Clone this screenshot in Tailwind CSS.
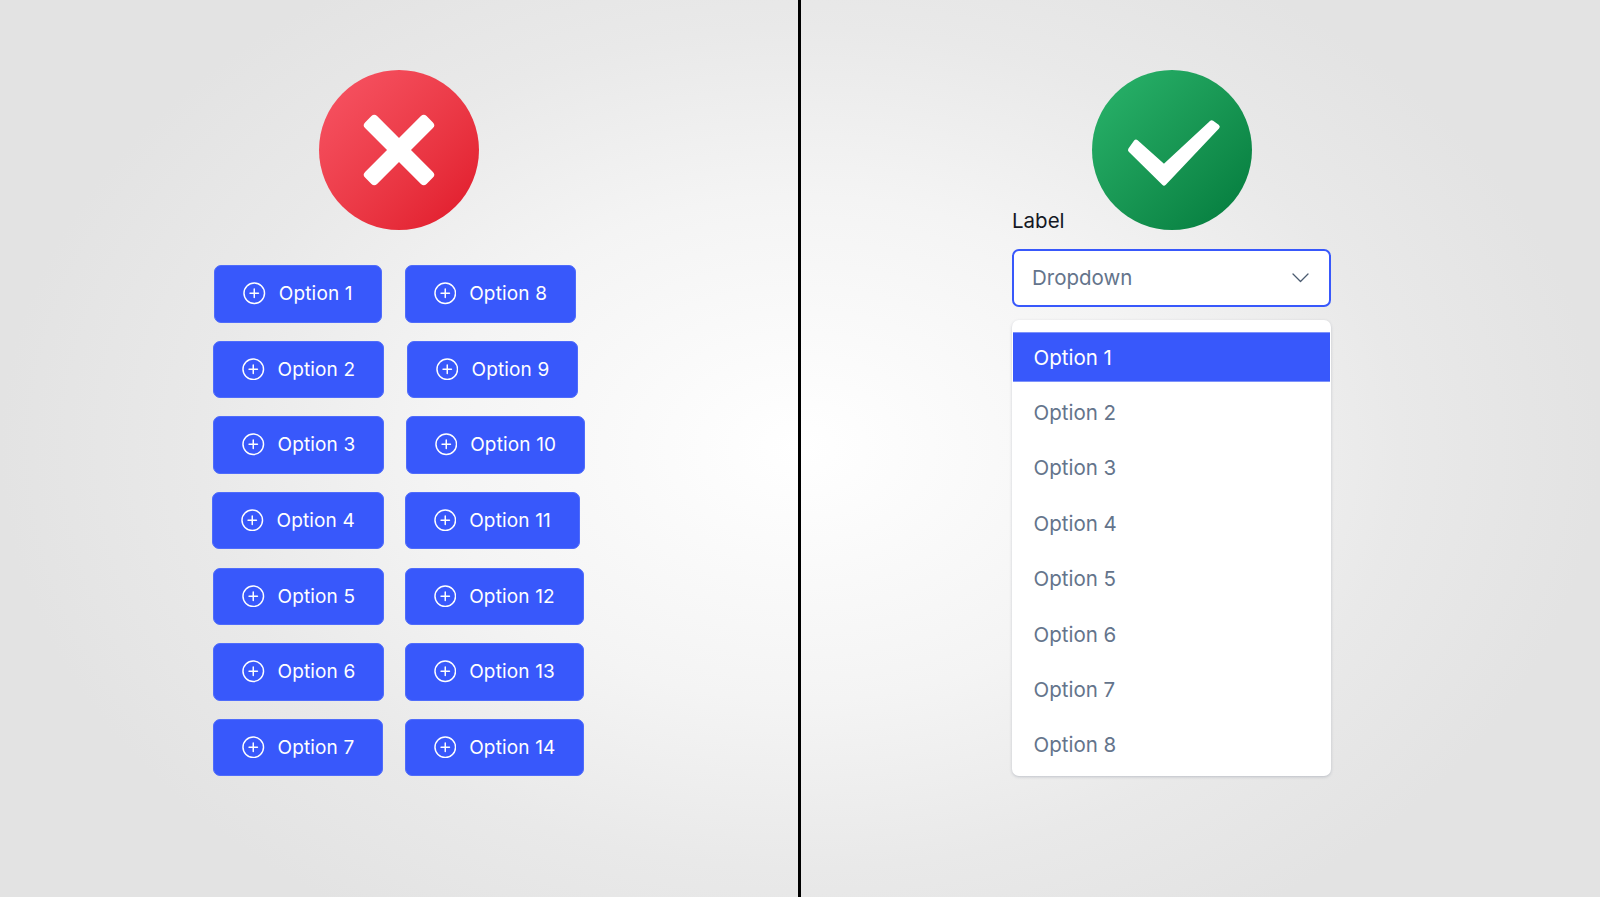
<!DOCTYPE html>
<html lang="en">
<head>
  <meta charset="UTF-8">
  <meta name="viewport" content="width=device-width, initial-scale=1.0">
  <title>Dropdown do and don't</title>
  <script src="https://cdn.jsdelivr.net/npm/@tailwindcss/browser@4"></script>
</head>
<body class="h-[897px] overflow-hidden font-['Inter',sans-serif] bg-[radial-gradient(ellipse_800px_560px_at_800px_448px,#ffffff_0%,#f4f4f4_45%,#e9e9e9_75%,#e3e3e3_100%)]">
  <div class="flex h-[897px]">

    <!-- left panel -->
    <div class="w-[798px] pt-[70px]">
      <div class="ml-[319px] size-[160px] rounded-full bg-linear-to-br from-[#f85565] to-[#e01428]">
        <svg class="size-[160px]" viewBox="0 0 160 160">
          <g fill="#fff" transform="rotate(45 80 80)">
            <rect x="36.5" y="71.5" width="87" height="17" rx="4"/>
            <rect x="71.5" y="36.5" width="17" height="87" rx="4"/>
          </g>
        </svg>
      </div>

      <div class="mt-[35px] flex">
        <div class="flex w-[404.7px] flex-col items-start gap-[18.17px] text-[19px] tracking-[0.15px] text-white">
          <button class="ml-[214.3px] flex h-[57.5px] items-center gap-[13px] rounded-[7px] border border-[#4f6cfb] bg-[#3858fb] px-[28px] pt-px">
            <svg class="-mt-[2px] size-[22.5px]" viewBox="0 0 23 23" fill="none" stroke="#fff" stroke-width="1.5" stroke-linecap="round"><circle cx="11.5" cy="11.5" r="10.5"/><path d="M11.5 7.2v8.6M7.2 11.5h8.6"/></svg>
            Option 1
          </button>
          <button class="ml-[213px] flex h-[57.5px] items-center gap-[13px] rounded-[7px] border border-[#4f6cfb] bg-[#3858fb] px-[28px] pt-px">
            <svg class="-mt-[2px] size-[22.5px]" viewBox="0 0 23 23" fill="none" stroke="#fff" stroke-width="1.5" stroke-linecap="round"><circle cx="11.5" cy="11.5" r="10.5"/><path d="M11.5 7.2v8.6M7.2 11.5h8.6"/></svg>
            Option 2
          </button>
          <button class="ml-[213px] flex h-[57.5px] items-center gap-[13px] rounded-[7px] border border-[#4f6cfb] bg-[#3858fb] px-[28px] pt-px">
            <svg class="-mt-[2px] size-[22.5px]" viewBox="0 0 23 23" fill="none" stroke="#fff" stroke-width="1.5" stroke-linecap="round"><circle cx="11.5" cy="11.5" r="10.5"/><path d="M11.5 7.2v8.6M7.2 11.5h8.6"/></svg>
            Option 3
          </button>
          <button class="ml-[212px] flex h-[57.5px] items-center gap-[13px] rounded-[7px] border border-[#4f6cfb] bg-[#3858fb] px-[28px] pt-px">
            <svg class="-mt-[2px] size-[22.5px]" viewBox="0 0 23 23" fill="none" stroke="#fff" stroke-width="1.5" stroke-linecap="round"><circle cx="11.5" cy="11.5" r="10.5"/><path d="M11.5 7.2v8.6M7.2 11.5h8.6"/></svg>
            Option 4
          </button>
          <button class="ml-[213px] flex h-[57.5px] items-center gap-[13px] rounded-[7px] border border-[#4f6cfb] bg-[#3858fb] px-[28px] pt-px">
            <svg class="-mt-[2px] size-[22.5px]" viewBox="0 0 23 23" fill="none" stroke="#fff" stroke-width="1.5" stroke-linecap="round"><circle cx="11.5" cy="11.5" r="10.5"/><path d="M11.5 7.2v8.6M7.2 11.5h8.6"/></svg>
            Option 5
          </button>
          <button class="ml-[213px] flex h-[57.5px] items-center gap-[13px] rounded-[7px] border border-[#4f6cfb] bg-[#3858fb] px-[28px] pt-px">
            <svg class="-mt-[2px] size-[22.5px]" viewBox="0 0 23 23" fill="none" stroke="#fff" stroke-width="1.5" stroke-linecap="round"><circle cx="11.5" cy="11.5" r="10.5"/><path d="M11.5 7.2v8.6M7.2 11.5h8.6"/></svg>
            Option 6
          </button>
          <button class="ml-[213px] flex h-[57.5px] items-center gap-[13px] rounded-[7px] border border-[#4f6cfb] bg-[#3858fb] px-[28px] pt-px">
            <svg class="-mt-[2px] size-[22.5px]" viewBox="0 0 23 23" fill="none" stroke="#fff" stroke-width="1.5" stroke-linecap="round"><circle cx="11.5" cy="11.5" r="10.5"/><path d="M11.5 7.2v8.6M7.2 11.5h8.6"/></svg>
            Option 7
          </button>
        </div>

        <div class="flex flex-col items-start gap-[18.17px] text-[19px] tracking-[0.15px] text-white">
          <button class="flex h-[57.5px] items-center gap-[13px] rounded-[7px] border border-[#4f6cfb] bg-[#3858fb] px-[28px] pt-px">
            <svg class="-mt-[2px] size-[22.5px]" viewBox="0 0 23 23" fill="none" stroke="#fff" stroke-width="1.5" stroke-linecap="round"><circle cx="11.5" cy="11.5" r="10.5"/><path d="M11.5 7.2v8.6M7.2 11.5h8.6"/></svg>
            Option 8
          </button>
          <button class="ml-[2.3px] flex h-[57.5px] items-center gap-[13px] rounded-[7px] border border-[#4f6cfb] bg-[#3858fb] px-[28px] pt-px">
            <svg class="-mt-[2px] size-[22.5px]" viewBox="0 0 23 23" fill="none" stroke="#fff" stroke-width="1.5" stroke-linecap="round"><circle cx="11.5" cy="11.5" r="10.5"/><path d="M11.5 7.2v8.6M7.2 11.5h8.6"/></svg>
            Option 9
          </button>
          <button class="ml-[1px] flex h-[57.5px] items-center gap-[13px] rounded-[7px] border border-[#4f6cfb] bg-[#3858fb] px-[28px] pt-px">
            <svg class="-mt-[2px] size-[22.5px]" viewBox="0 0 23 23" fill="none" stroke="#fff" stroke-width="1.5" stroke-linecap="round"><circle cx="11.5" cy="11.5" r="10.5"/><path d="M11.5 7.2v8.6M7.2 11.5h8.6"/></svg>
            Option 10
          </button>
          <button class="flex h-[57.5px] items-center gap-[13px] rounded-[7px] border border-[#4f6cfb] bg-[#3858fb] px-[28px] pt-px">
            <svg class="-mt-[2px] size-[22.5px]" viewBox="0 0 23 23" fill="none" stroke="#fff" stroke-width="1.5" stroke-linecap="round"><circle cx="11.5" cy="11.5" r="10.5"/><path d="M11.5 7.2v8.6M7.2 11.5h8.6"/></svg>
            Option 11
          </button>
          <button class="flex h-[57.5px] items-center gap-[13px] rounded-[7px] border border-[#4f6cfb] bg-[#3858fb] px-[28px] pt-px">
            <svg class="-mt-[2px] size-[22.5px]" viewBox="0 0 23 23" fill="none" stroke="#fff" stroke-width="1.5" stroke-linecap="round"><circle cx="11.5" cy="11.5" r="10.5"/><path d="M11.5 7.2v8.6M7.2 11.5h8.6"/></svg>
            Option 12
          </button>
          <button class="flex h-[57.5px] items-center gap-[13px] rounded-[7px] border border-[#4f6cfb] bg-[#3858fb] px-[28px] pt-px">
            <svg class="-mt-[2px] size-[22.5px]" viewBox="0 0 23 23" fill="none" stroke="#fff" stroke-width="1.5" stroke-linecap="round"><circle cx="11.5" cy="11.5" r="10.5"/><path d="M11.5 7.2v8.6M7.2 11.5h8.6"/></svg>
            Option 13
          </button>
          <button class="flex h-[57.5px] items-center gap-[13px] rounded-[7px] border border-[#4f6cfb] bg-[#3858fb] px-[28px] pt-px">
            <svg class="-mt-[2px] size-[22.5px]" viewBox="0 0 23 23" fill="none" stroke="#fff" stroke-width="1.5" stroke-linecap="round"><circle cx="11.5" cy="11.5" r="10.5"/><path d="M11.5 7.2v8.6M7.2 11.5h8.6"/></svg>
            Option 14
          </button>
        </div>
      </div>
    </div>

    <!-- divider -->
    <div class="w-[3px] bg-black"></div>

    <!-- right panel -->
    <div class="flex-1 pt-[70px]">
      <div class="ml-[290.7px] size-[160px] rounded-full bg-linear-to-br from-[#2ab56c] to-[#027a3c]">
        <svg class="size-[160px]" viewBox="0 0 160 160">
          <polygon fill="#fff" stroke="#fff" stroke-width="5" stroke-linejoin="round" points="38.5,80 72,113 125.2,56.7 119.7,52.8 72,97.2 44,72.2"/>
        </svg>
      </div>

      <div class="ml-[211px] w-[319px]">
        <div class="-mt-[21px] text-[20.5px] leading-[24px] text-[#141824]">Label</div>
        <div class="mt-[15.7px] flex h-[58px] items-center justify-between rounded-[7px] border-2 border-[#3858fb] bg-white pl-[18px] pr-[20px] text-[20.5px] text-[#64748b]">
          <span class="pt-[2px]">Dropdown</span>
          <svg class="h-[10px] w-[17px]" viewBox="0 0 17 10" fill="none" stroke="#4b5b70" stroke-width="1.3" stroke-linecap="round" stroke-linejoin="round"><path d="M1 1l7.5 7.5L16 1"/></svg>
        </div>
        <ul class="mt-[13.3px] flex h-[456px] flex-col gap-[6.4px] rounded-[7px] bg-white px-px pt-[12.5px] text-[20.5px] text-[#64748b] shadow-[0_1px_3px_rgba(60,70,100,0.25)]">
          <li class="flex h-[49.3px] items-center border-y border-[#7d92fa] bg-[#3858fb] pl-[20.5px] pt-[2px] text-white">Option 1</li>
          <li class="-mb-[0.3px] flex h-[49px] items-center pl-[20.5px] pt-[2px]">Option 2</li>
          <li class="flex h-[49px] items-center pl-[20.5px] pt-[2px]">Option 3</li>
          <li class="flex h-[49px] items-center pl-[20.5px] pt-[2px]">Option 4</li>
          <li class="flex h-[49px] items-center pl-[20.5px] pt-[2px]">Option 5</li>
          <li class="flex h-[49px] items-center pl-[20.5px] pt-[2px]">Option 6</li>
          <li class="flex h-[49px] items-center pl-[20.5px] pt-[2px]">Option 7</li>
          <li class="flex h-[49px] items-center pl-[20.5px] pt-[2px]">Option 8</li>
        </ul>
      </div>
    </div>

  </div>
</body>
</html>
